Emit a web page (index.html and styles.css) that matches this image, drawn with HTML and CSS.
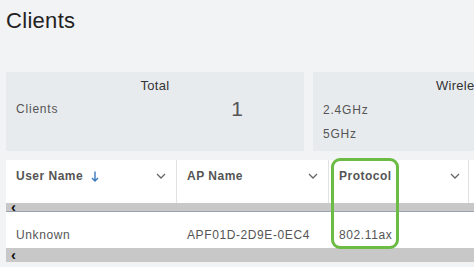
FILE: index.html
```html
<!DOCTYPE html>
<html>
<head>
    <meta charset="utf-8" />
    <title>Clients</title>
    <meta name="viewport" content="width=device-width, initial-scale=1">
    <link rel="stylesheet" href="styles.css">
</head>
<body>
    <h1 class="page-title">Clients</h1>

    <div class="cards">
        <div class="card">
            <div class="card-title">Total</div>
            <div class="card-row">
                <span class="card-label">Clients</span>
                <span class="card-value">1</span>
            </div>
        </div>
        <div class="card">
            <div class="card-title">Wireless</div>
            <div class="card-list">
                <div class="card-row small">
                    <span class="card-label">2.4GHz</span>
                </div>
                <div class="card-row small">
                    <span class="card-label">5GHz</span>
                </div>
            </div>
        </div>
    </div>

    <div class="table">
        <div class="thead">
            <div class="th">
                <span class="th-text">User Name</span>
                <svg class="sort" width="8" height="11" viewBox="0 0 8 11"><path d="M4 0.5 V10 M1 7 L4 10 L7 7" fill="none" stroke="#3a78c0" stroke-width="1.4"/></svg>
                <svg class="chev" width="10" height="6" viewBox="0 0 10 6"><polyline points="1,1 5,5 9,1" fill="none" stroke="#666" stroke-width="1.3"/></svg>
            </div>
            <div class="th">
                <span class="th-text">AP Name</span>
                <svg class="chev" width="10" height="6" viewBox="0 0 10 6"><polyline points="1,1 5,5 9,1" fill="none" stroke="#666" stroke-width="1.3"/></svg>
            </div>
            <div class="th">
                <span class="th-text">Protocol</span>
                <svg class="chev" width="10" height="6" viewBox="0 0 10 6"><polyline points="1,1 5,5 9,1" fill="none" stroke="#666" stroke-width="1.3"/></svg>
            </div>
            <div class="th"></div>
        </div>
        <div class="scrollbar thin"><span class="arrow">&lsaquo;</span></div>
        <div class="trow">
            <div class="td">Unknown</div>
            <div class="td">APF01D-2D9E-0EC4</div>
            <div class="td">802.11ax</div>
            <div class="td"></div>
        </div>
        <div class="scrollbar"><span class="arrow">&lsaquo;</span></div>

        <div class="highlight"></div>
    </div>
</body>
</html>
```

FILE: styles.css
```css
* {
    padding: 0;
    margin: 0;
    box-sizing: border-box;
}

body {
    width: 474px;
    height: 267px;
    overflow: hidden;
    background-color: #f2f3f5;
    padding-left: 6px;
    font-family: "Liberation Sans", Arial, sans-serif;
}

.page-title {
    padding-top: 8px;
    font-size: 22px;
    line-height: 26px;
    font-weight: normal;
    color: #222;
    letter-spacing: 0.3px;
}

.cards {
    margin-top: 38px;
    display: flex;
    gap: 9px;
}

.card {
    flex: 0 0 298px;
    height: 79px;
    background-color: #e8ebee;
    padding: 6px 10px 0 10px;
}

.card-title {
    text-align: center;
    font-size: 13px;
    line-height: 16px;
    color: #333;
    letter-spacing: 0.3px;
}

.card-row {
    display: flex;
    align-items: center;
    height: 26px;
    margin-top: 2px;
}

.card-list {
    margin-top: 4px;
}

.card-row.small {
    height: 24px;
    margin-top: 0;
}

.card-label {
    font-size: 12px;
    color: #555;
    letter-spacing: 0.8px;
}

.card-value {
    margin-left: 173px;
    font-size: 21px;
    color: #555;
}

.table {
    position: relative;
    margin-top: 9px;
    width: 468px;
}

.thead,
.trow {
    display: grid;
    grid-template-columns: 171px 152px 140px 1fr;
    background-color: #fff;
}

.thead {
    height: 43px;
}

.th {
    position: relative;
    display: flex;
    align-items: flex-start;
    padding: 9px 10px 0 10px;
    border-right: 1px solid #e2e2e2;
}

.th:last-child {
    border-right: 0;
}

.th-text {
    font-size: 12px;
    font-weight: bold;
    color: #555;
    letter-spacing: 0.5px;
}

.sort {
    margin-left: 8px;
    margin-top: 2px;
}

.chev {
    margin-left: auto;
    margin-top: 4px;
    margin-right: 0;
}

.th:nth-child(3) .chev {
    margin-right: -2px;
}

.scrollbar {
    height: 14px;
    background-color: #c8c8c8;
    display: flex;
    align-items: center;
    padding-left: 5px;
}

.scrollbar.thin {
    height: 9px;
    border-bottom: 1px solid #95a3b3;
}

.arrow {
    font-size: 15px;
    font-weight: bold;
    line-height: 10px;
    color: #111;
}

.trow {
    height: 36px;
}

.td {
    display: flex;
    align-items: center;
    padding: 9px 0 0 10px;
    font-size: 12px;
    color: #555;
    letter-spacing: 0.6px;
}

.highlight {
    position: absolute;
    left: 325px;
    top: -2px;
    width: 68px;
    height: 91px;
    border: 3px solid #6bbb45;
    border-radius: 9px;
}
```
